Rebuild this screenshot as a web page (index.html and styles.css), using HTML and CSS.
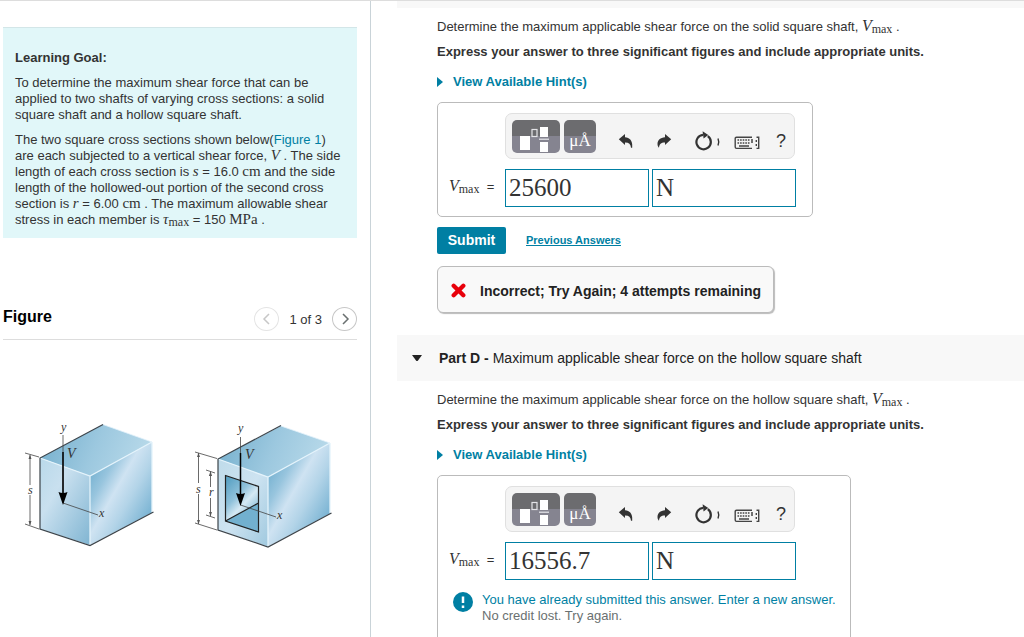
FILE: index.html
```html
<!DOCTYPE html>
<html lang="en">
<head>
<meta charset="utf-8">
<meta name="viewport" content="width=device-width, initial-scale=1">
<title>Maximum applicable shear force</title>
<link rel="stylesheet" href="styles.css">
</head>
<body>
<svg class="defs" aria-hidden="true">
  <symbol id="i-templates" viewBox="0 0 48 33">
    <rect x="8" y="16" width="10" height="14" fill="#fff"/>
    <rect x="20" y="9.500" width="5" height="7" fill="none" stroke="#e4e4e8" stroke-width="1.2"/>
    <rect x="28" y="7" width="8" height="10" fill="#fff"/>
    <rect x="27" y="18.500" width="10" height="1.5" fill="#d4d4da"/>
    <rect x="28" y="22" width="8" height="10" fill="#fff"/>
  </symbol>
  <symbol id="i-undo" viewBox="0 0 16 16">
    <path d="M0.8 6.2 7 1v3.2c4.600.2 7.200 3.600 7.200 7.300v3.200h-1.200c-.2-3.600-2.300-5.300-6-5.200v2.400z" fill="#333"/>
  </symbol>
  <symbol id="i-redo" viewBox="0 0 16 16">
    <path d="M15.200 6.200 9 1v3.200C4.400 4.400 1.500 7.300 1.500 11c0 1.600.5 2.800 1.500 3.700C3.200 11 5.300 9.400 9 9.500v2.400z" fill="#333"/>
  </symbol>
  <symbol id="i-reset" viewBox="0 0 26 20">
    <path d="M12.800 5.200A7.200 7.200 0 1 1 8 3.900" fill="none" stroke="#333" stroke-width="2.200"/>
    <path d="M7.600 0.300 13.300 3.900 8.600 7.400z" fill="#333"/>
    <path d="M23 7.500q1.500 3.500 0 7" fill="none" stroke="#333" stroke-width="1.400"/>
  </symbol>
  <symbol id="i-keyboard" viewBox="0 0 26 14">
    <path d="M18 1.200H2.500Q1.200 1.200 1.200 2.500v8.600q0 1.300 1.300 1.300H18" fill="none" stroke="#444" stroke-width="1.400"/>
    <path d="M3.500 4h13M3.500 7h13" stroke="#444" stroke-width="1.600" stroke-dasharray="1.600 1"/>
    <path d="M5 10h10M18 3v4" stroke="#444" stroke-width="1.500"/>
    <path d="M22.500 1.200h2.200v11.200h-2.200M22.300 4v2M22.300 8v2" fill="none" stroke="#444" stroke-width="1.400"/>
  </symbol>
</svg>
<div class="page">
  <aside class="side">
    <section class="goal">
      <h2>Learning Goal:</h2>
      <p>To determine the maximum shear force that can be applied to two shafts of varying cross sections: a solid square shaft and a hollow square shaft.</p>
      <p>The two square cross sections shown below(<a href="#figure">Figure 1</a>) are each subjected to a vertical shear force, <i class="math">V</i> . The side length of each cross section is <i class="math">s</i> = 16.0 <span class="math">cm</span> and the side length of the hollowed-out portion of the second cross section is <i class="math">r</i> = 6.00 <span class="math">cm</span> . The maximum allowable shear stress in each member is <span class="math"><i>τ</i><sub>max</sub></span> = 150 <span class="math">MPa</span> .</p>
    </section>
    <section class="figure" id="figure">
      <header class="figure-head">
        <h2>Figure</h2>
        <button class="round" type="button" aria-label="Previous figure" disabled><svg viewBox="0 0 12 12"><path d="M8 1 3 6l5 5"/></svg></button>
        <span>1 of 3</span>
        <button class="round" type="button" aria-label="Next figure"><svg viewBox="0 0 12 12"><path d="M4 1l5 5-5 5"/></svg></button>
      </header>
      <svg class="drawing" viewBox="3 414 354 140" role="img" aria-label="Solid and hollow square shafts">
        <defs>
          <linearGradient id="top" x1="0" y1="0.300" x2="1" y2="0.500"><stop offset="0" stop-color="#76b0ce"/><stop offset="0.500" stop-color="#9cc8df"/><stop offset="1" stop-color="#b9daea"/></linearGradient>
          <linearGradient id="front" x1="0" y1="0" x2="1" y2="1"><stop offset="0" stop-color="#b9d9ea"/><stop offset="0.350" stop-color="#c9e0ef"/><stop offset="1" stop-color="#80b5d2"/></linearGradient>
          <linearGradient id="rim" x1="0" y1="0" x2="1" y2="1"><stop offset="0" stop-color="#bfdbea"/><stop offset="0.500" stop-color="#cde3f1"/><stop offset="1" stop-color="#a0c9df"/></linearGradient>
          <linearGradient id="right" x1="0" y1="0.150" x2="0.900" y2="1"><stop offset="0" stop-color="#67a9cb"/><stop offset="0.250" stop-color="#98c5de"/><stop offset="0.420" stop-color="#cfe3f2"/><stop offset="0.600" stop-color="#b3d4e8"/><stop offset="1" stop-color="#60a5ca"/></linearGradient>
          <linearGradient id="hole" x1="0.200" y1="0" x2="0.700" y2="0.800"><stop offset="0" stop-color="#5ca3c5"/><stop offset="0.400" stop-color="#8fc1da"/><stop offset="0.650" stop-color="#d5e9f4"/><stop offset="1" stop-color="#86bad5"/></linearGradient>
          <marker id="tick" viewBox="0 0 6 6" refX="5.500" refY="3" markerWidth="6" markerHeight="6" orient="auto-start-reverse"><path d="M0 1 6 3 0 5z" fill="#555"/></marker>
        </defs>
        <path d="M40 458 103 424.500 152 442 90 476z" fill="url(#top)"/>
        <path d="M40 458 90 476V545L40 529z" fill="url(#front)"/>
        <path d="M90 476 152 442V512.500L90 545z" fill="url(#right)"/>
        <path class="glint" d="M40 458 90 476 152 442M90 476V545M152 442V512"/>
        <path class="glint faint" d="M103 424.500 152 442"/>
        <path class="edge" d="M103 424.500 40 458V529L90 545.500 153.500 512"/>
        <path class="axis" d="M63 435V503L98 515M25 453 39 457M25 524 39 529"/>
        <path class="axis" marker-start="url(#tick)" d="M30 455V485"/><path class="axis" marker-end="url(#tick)" d="M30 495V525"/>
        <path class="force" d="M63 452V496"/><path d="M58.500 492q4.500 2 9 0L63 505z"/>
        <text x="61" y="431">y</text><text x="67" y="458" class="big">V</text><text x="99" y="517">x</text><text x="28" y="494">s</text>

        <path d="M218 459 281 426 330 443 268 477z" fill="url(#top)"/>
        <path d="M218 459 268 477V546.500L218 530z" fill="url(#rim)"/>
        <path d="M268 477 330 443V513.500L268 546.500z" fill="url(#right)"/>
        <path class="glint" d="M218 459 268 477 330 443M268 477V546M330 443V513"/>
        <path class="glint faint" d="M281 426 330 443"/>
        <path d="M225.500 475.500 258.500 486.500V532L225.500 521z" fill="url(#hole)"/>
        <path d="M225.500 521 258.500 503V532z" fill="#72b0cf"/>
        <path class="edge dark" d="M225.500 475.500 258.500 486.500V532L225.500 521zM225.500 521 258.500 503"/>
        <path class="edge" d="M281 425.500 218 459V530L268 547 331.500 513"/>
        <path class="axis" d="M240.500 437V505L276 517M195 452 217 458.500M195 523 217 530M206 470 215 473M206 515 215 518"/>
        <path class="axis" marker-start="url(#tick)" d="M198.500 453V483"/><path class="axis" marker-end="url(#tick)" d="M198.500 494V524"/>
        <path class="axis" marker-start="url(#tick)" d="M210.500 471.500V487"/><path class="axis" marker-end="url(#tick)" d="M210.500 498V516"/>
        <path class="force" d="M240.500 453V497"/><path d="M236 493q4.500 2 9 0L240.500 506z"/>
        <text x="238" y="432">y</text><text x="245" y="459" class="big">V</text><text x="277" y="519">x</text><text x="196" y="493">s</text><text x="209" y="496">r</text>
      </svg>
    </section>
  </aside>
  <main class="main">
    <div class="strip"></div>
    <section class="part">
      <p>Determine the maximum applicable shear force on the solid square shaft, <span class="math"><i>V</i><sub>max</sub></span> .</p>
      <p class="strong">Express your answer to three significant figures and include appropriate units.</p>
      <button class="hint" type="button">View Available Hint(s)</button>
      <form class="answer">
        <div class="toolbar">
          <button class="dark-btn wide" type="button" aria-label="Templates"><svg><use href="#i-templates"/></svg></button>
          <button class="dark-btn" type="button" aria-label="Units">μÅ</button>
          <button class="tool t-arrow" type="button" aria-label="Undo"><svg><use href="#i-undo"/></svg></button>
          <button class="tool t-arrow" type="button" aria-label="Redo"><svg><use href="#i-redo"/></svg></button>
          <button class="tool t-reset" type="button" aria-label="Reset"><svg><use href="#i-reset"/></svg></button>
          <button class="tool t-keys" type="button" aria-label="Keyboard shortcuts"><svg><use href="#i-keyboard"/></svg></button>
          <button class="tool t-help" type="button" aria-label="Help">?</button>
        </div>
        <label for="value-c"><span class="math"><i>V</i><sub>max</sub></span>&nbsp; =</label>
        <div class="fields"><input id="value-c" type="text" value="25600"><input type="text" aria-label="Units" value="N"></div>
      </form>
      <div class="actions"><button class="submit" type="button">Submit</button><a href="#previous">Previous Answers</a></div>
      <div class="feedback"><svg viewBox="0 0 14 14"><path d="M2.500 2.500 11.500 11.500M11.500 2.500 2.500 11.500"/></svg>Incorrect; Try Again; 4 attempts remaining</div>
    </section>
    <h2 class="part-head"><button type="button" aria-label="Collapse Part D"><svg viewBox="0 0 12 8"><path d="M1 1h10L7 6.500Q6 7.500 5 6.500z"/></svg></button><span><b>Part D -</b> Maximum applicable shear force on the hollow square shaft</span></h2>
    <section class="part">
      <p>Determine the maximum applicable shear force on the hollow square shaft, <span class="math"><i>V</i><sub>max</sub></span> .</p>
      <p class="strong">Express your answer to three significant figures and include appropriate units.</p>
      <button class="hint" type="button">View Available Hint(s)</button>
      <form class="answer">
        <div class="toolbar">
          <button class="dark-btn wide" type="button" aria-label="Templates"><svg><use href="#i-templates"/></svg></button>
          <button class="dark-btn" type="button" aria-label="Units">μÅ</button>
          <button class="tool t-arrow" type="button" aria-label="Undo"><svg><use href="#i-undo"/></svg></button>
          <button class="tool t-arrow" type="button" aria-label="Redo"><svg><use href="#i-redo"/></svg></button>
          <button class="tool t-reset" type="button" aria-label="Reset"><svg><use href="#i-reset"/></svg></button>
          <button class="tool t-keys" type="button" aria-label="Keyboard shortcuts"><svg><use href="#i-keyboard"/></svg></button>
          <button class="tool t-help" type="button" aria-label="Help">?</button>
        </div>
        <label for="value-d"><span class="math"><i>V</i><sub>max</sub></span>&nbsp; =</label>
        <div class="fields"><input id="value-d" type="text" value="16556.7"><input type="text" aria-label="Units" value="N"></div>
        <div class="notice">
          <svg viewBox="0 0 20 20"><circle cx="10" cy="10" r="10" fill="#007fa3"/><path d="M10 4.500v6.500M10 13.500v2.500" stroke="#fff" stroke-width="2.500"/></svg>
          <p><span>You have already submitted this answer. Enter a new answer.</span><br>No credit lost. Try again.</p>
        </div>
      </form>
    </section>
  </main>
</div>
</body>
</html>
```
FILE: styles.css
```css
* { box-sizing: border-box; }
body {
  margin: 0;
  background: #fff;
  color: #333;
  font: 13px/16px "Liberation Sans", Arial, sans-serif;
}
h2, p { margin: 0; }
button { margin: 0; padding: 0; border: 0; background: none; color: inherit; font: inherit; }
a { color: #007fa3; }
.defs { display: none; }
.page {
  display: grid;
  grid-template-columns: 371px 1fr;
  height: 100vh;
  overflow: hidden;
  border-top: 1px solid #ddd;
}
.math { font-family: "Liberation Serif", "Times New Roman", serif; font-size: 16px; line-height: 0; }
.math sub { font-size: 12px; line-height: 0; vertical-align: -2px; }

.side { border-right: 1px solid #c9d3d8; padding: 26px 13px 0 3px; }
.goal {
  display: grid;
  gap: 9px;
  padding: 22px 12px 10px;
  border-top: 1px solid #d3e6e8;
  background: #e1f7f9;
}
.goal h2 { font-size: 13px; line-height: 16px; }
.goal a { text-decoration: none; }
.goal .math { font-size: 15px; }
.figure { padding-top: 69px; }
.figure-head {
  display: flex;
  align-items: center;
  padding-bottom: 8px;
  border-bottom: 1px solid #ddd;
}
.figure-head h2 { flex: 1; padding-bottom: 4px; color: #000; font-size: 16px; line-height: 20px; }
.figure-head span { padding: 2px 10px 0; }
.round {
  display: grid;
  place-items: center;
  width: 25px;
  height: 24px;
  border: 1px solid #c7c7c7;
  border-radius: 50%;
}
.round svg { width: 12px; height: 12px; fill: none; stroke: #6a7070; stroke-width: 1.5; }
.round:disabled { border-color: #e4e4e4; }
.round:disabled svg { stroke: #c7c7c7; }
.drawing { display: block; width: 100%; margin-top: 74px; font: italic 12px "Liberation Serif", serif; }
.drawing text { fill: #333; }
.drawing .big { font-size: 14px; }
.glint { fill: none; stroke: #e4f3fb; stroke-width: 1.3; }
.faint { stroke-width: 0.8; }
.edge { fill: none; stroke: #3d444a; stroke-width: 1.2; }
.dark { stroke: #222; }
.axis { fill: none; stroke: #444; stroke-width: 0.8; }
.force { stroke: #000; stroke-width: 1.5; }

.main { padding-left: 26px; min-width: 0; }
.strip { height: 7px; background: #f8f8f8; }
.part { padding: 11px 40px 22px; }
.strong { margin-top: 9px; font-weight: bold; }
.hint {
  display: flex;
  align-items: center;
  gap: 10px;
  margin: 14px 0 12px;
  color: #007fa3;
  font-weight: bold;
}
.hint::before { content: ""; border: 5px solid transparent; border-left: 6px solid #007fa3; border-right: 0; }
.answer {
  display: grid;
  grid-template-columns: 56px 291px minmax(2px, auto);
  align-items: center;
  row-gap: 10px;
  width: fit-content;
  padding: 10px 14px 9px 11px;
  border: 1px solid #bbb;
  border-radius: 5px;
}
.toolbar {
  grid-column: 2;
  display: flex;
  align-items: center;
  height: 46px;
  margin-right: 1px;
  padding: 1px 0 0 6px;
  border: 1px solid #e0e0e0;
  border-radius: 7px;
  background: #f4f4f4;
}
.toolbar button { flex-shrink: 0; }
.dark-btn {
  width: 32px;
  height: 33px;
  margin-right: 4px;
  padding-top: 8px;
  border-radius: 5px;
  background: linear-gradient(#6c6c6f 50%, #858490 50%);
  color: #fff;
  font: 17px/24px "Liberation Serif", serif;
}
.wide { width: 48px; padding: 0; }
.dark-btn svg { display: block; width: 48px; height: 33px; }
.tool { display: grid; place-items: center; height: 34px; padding-top: 9px; }
.t-arrow { width: 38px; }
.dark-btn + .t-arrow { margin-left: 7px; }
.t-arrow svg { width: 16px; height: 16px; }
.t-reset { width: 50px; }
.t-reset svg { width: 26px; height: 20px; }
.t-keys { width: 28px; padding-top: 12px; }
.t-keys svg { width: 26px; height: 14px; }
.toolbar .t-help { flex: 1; justify-items: end; padding-right: 8px; font-size: 18px; }
.answer label { grid-column: 1; padding-bottom: 2px; white-space: nowrap; }
.fields { display: grid; grid-template-columns: 1fr 1fr; gap: 3px; }
.fields input {
  width: 100%;
  min-width: 0;
  height: 38px;
  padding: 0 3px;
  border: 1px solid #007fa3;
  border-radius: 0;
  background: #fff;
  color: #333;
  font: 25px "Liberation Serif", serif;
}
.notice { grid-column: 1 / -1; display: flex; gap: 9px; padding: 2px 0 30px 4px; }
.notice svg { width: 20px; height: 20px; }
.notice p { color: #6a7070; white-space: nowrap; }
.notice span { color: #007fa3; }
.actions { display: flex; align-items: center; gap: 20px; margin: 10px 0 12px; }
.submit {
  width: 69px;
  height: 27px;
  padding-bottom: 2px;
  border-radius: 2px;
  background: #007fa3;
  color: #fff;
  font-size: 14px;
  font-weight: bold;
}
.actions a { padding-bottom: 2px; font-size: 11px; font-weight: bold; }
.feedback {
  display: flex;
  align-items: center;
  gap: 14px;
  width: fit-content;
  height: 47px;
  padding: 2px 12px 0 13px;
  border: 1px solid #bbb;
  border-radius: 6px;
  box-shadow: 1px 1px 1px #bbb;
  background: #f9f9f9;
  color: #222;
  font-size: 14px;
  font-weight: bold;
}
.feedback svg { width: 15px; height: 15px; stroke: #e8000b; stroke-width: 4; stroke-linecap: round; }
.part-head {
  display: flex;
  align-items: center;
  gap: 16px;
  height: 46px;
  padding-left: 14px;
  background: #f8f8f8;
  color: #222;
  font-size: 14px;
  font-weight: normal;
}
.part-head button { display: flex; }
.part-head svg { width: 12px; height: 8px; fill: #222; }
```
